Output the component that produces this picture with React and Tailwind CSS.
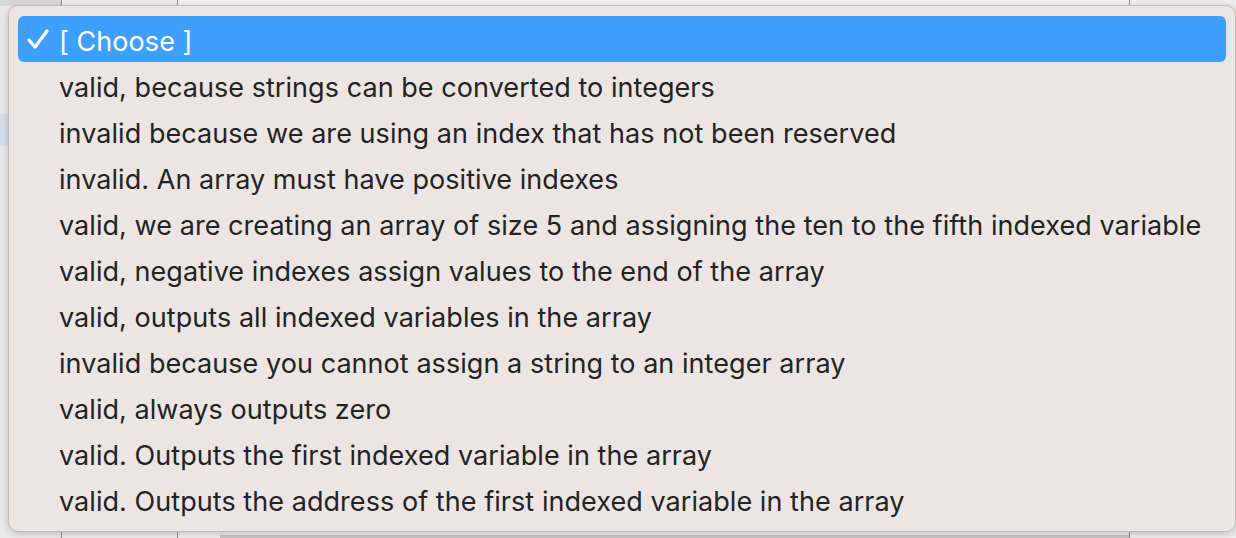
const options = [
  'valid, because strings can be converted to integers',
  'invalid because we are using an index that has not been reserved',
  'invalid. An array must have positive indexes',
  'valid, we are creating an array of size 5 and assigning the ten to the fifth indexed variable',
  'valid, negative indexes assign values to the end of the array',
  'valid, outputs all indexed variables in the array',
  'invalid because you cannot assign a string to an integer array',
  'valid, always outputs zero',
  'valid. Outputs the first indexed variable in the array',
  'valid. Outputs the address of the first indexed variable in the array',
]

function Check() {
  return (
    <svg width="22" height="20" viewBox="0 0 22 20" fill="none" aria-hidden>
      <path d="M2 11 L8 18 L20 2" stroke="white" strokeWidth="3.2" strokeLinecap="round" strokeLinejoin="round" />
    </svg>
  )
}

export default function App() {
  return (
    <div className="relative h-[538px] w-[1236px] overflow-hidden bg-[#e9e9e9] font-['Inter',sans-serif]">
      {/* page behind the popup */}
      <div className="flex h-full">
        <div className="flex w-[62px] flex-col border-r border-[#8a8a8a]">
          <div className="h-[6px] bg-[#d6d6d6]" />
          <div className="h-[108px]" />
          <div className="h-[32px] bg-[#d3dde8]" />
          <div className="flex-1" />
        </div>
        <div className="w-[116px] border-r border-[#8a8a8a] bg-[#ececec]" />
        <div className="flex flex-1 flex-col justify-end border-r border-[#8a8a8a] bg-[#eeeeee]">
          <div className="ml-[42px] h-[3px] bg-[#c4c4c4]" />
        </div>
        <div className="w-[106px] bg-[#ececec]" />
      </div>

      {/* popup menu */}
      <div className="absolute left-[8px] top-[5px] h-[527px] w-[1228px] rounded-[10px] border border-[#c2bdbc] bg-[#ede5e3] px-[9px] pt-[10px] shadow-[0_2px_6px_rgba(0,0,0,0.18)]">
        <div className="flex h-[46px] items-center rounded-[6px] bg-[#3e9ffd] text-white">
          <span className="ml-[9px] flex w-[32px] justify-start"><Check /></span>
          <span className="pt-[4px] text-[27px] leading-none tracking-[0.002em]">[ Choose ]</span>
        </div>
        {options.map((o) => (
          <div key={o} className="flex h-[46px] items-center pl-[41px] pt-[4px] text-[27px] leading-none tracking-[0.002em] text-[#232323]">
            {o}
          </div>
        ))}
      </div>
    </div>
  )
}
